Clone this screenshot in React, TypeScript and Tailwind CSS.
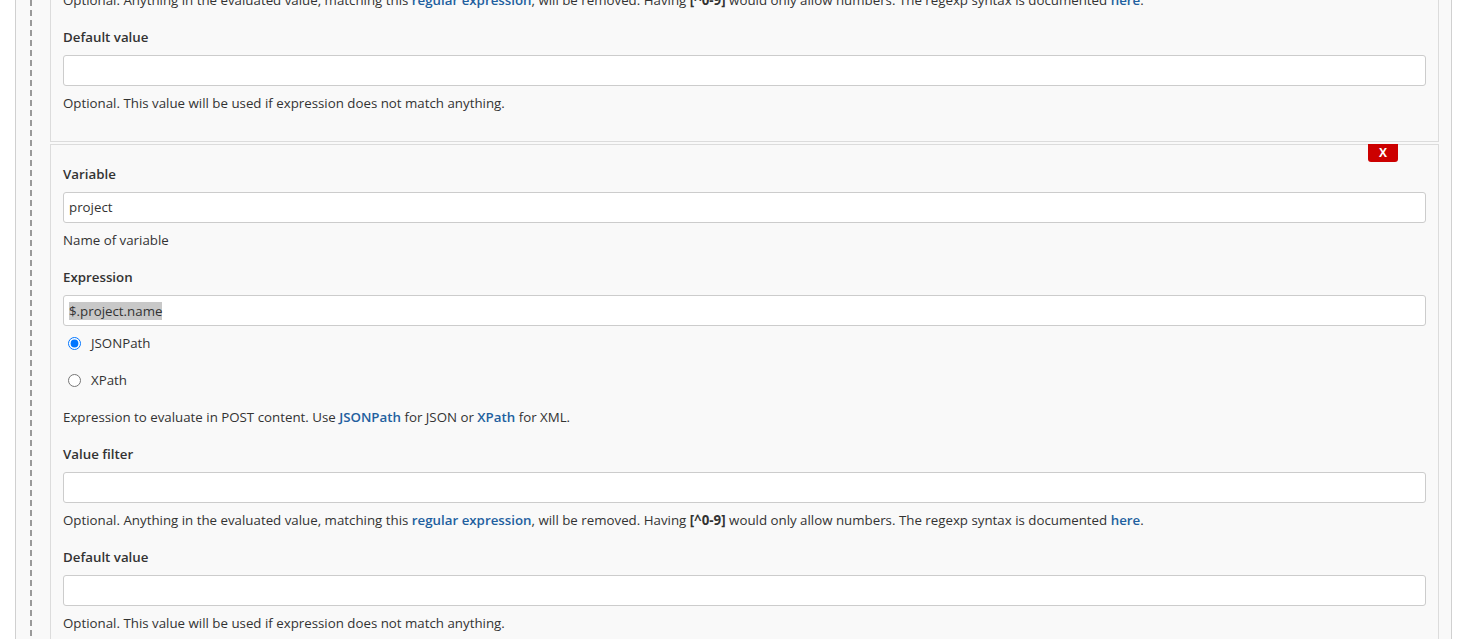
import type { ReactNode } from 'react'

const link = 'font-semibold text-[#22609f]'

function Label({ children }: { children: ReactNode }) {
  return <div className="h-5 leading-5 font-semibold">{children}</div>
}

function Help({ children, className = '' }: { children: ReactNode; className?: string }) {
  return <div className={`h-5 leading-5 whitespace-nowrap ${className}`}>{children}</div>
}

function TextBox({ value, selected }: { value?: string; selected?: boolean }) {
  return (
    <div className="mt-2 flex h-[31px] items-center rounded-[3px] border border-[#cccccc] bg-white px-[5px]">
      {value && (
        <span className={selected ? 'bg-[#c8c8c8] leading-[18px]' : ''}>{value}</span>
      )}
    </div>
  )
}

function Radio({ label, checked }: { label: string; checked?: boolean }) {
  return (
    <div className="flex h-5 items-center pt-px">
      <input
        type="radio"
        name="exprType"
        defaultChecked={checked}
        className="m-0 ml-[5px] h-[13px] w-[13px] accent-[#0075ff]"
      />
      <span className="ml-[10px]">{label}</span>
    </div>
  )
}

function RegexHelp({ className = '' }: { className?: string }) {
  return (
    <Help className={className}>
      Optional. Anything in the evaluated value, matching this <span className={link}>regular expression</span>, will be
      removed. Having <b>[^0-9]</b> would only allow numbers. The regexp syntax is documented{' '}
      <span className={link}>here</span>.
    </Help>
  )
}

function DefaultValue() {
  return (
    <div>
      <Label>Default value</Label>
      <TextBox />
      <Help className="mt-[7px]">Optional. This value will be used if expression does not match anything.</Help>
    </div>
  )
}

export default function App() {
  return (
    <div className="h-screen overflow-hidden bg-white font-['Open_Sans',sans-serif] text-[13.3px] text-[#333333]">
      <div className="-mt-[10px] ml-[15px] flex h-[calc(100vh+10px)] w-[1437px] border-x border-[#d0d0d0] bg-[#f9f9f9]">
        <div className="ml-[14px] w-[2px] bg-[repeating-linear-gradient(to_bottom,#9a9a9a_0_6px,transparent_6px_10px)]" />
        <div className="ml-[18px] w-[1389px]">
          {/* previous entry, cut off at the top */}
          <div className="border-x border-b border-[#dcdcdc] bg-[#f9f9f9] px-3 pb-[28px]">
            <RegexHelp className="mb-[17px]" />
            <DefaultValue />
          </div>

          {/* current entry */}
          <div className="relative mt-[2px] border border-[#dcdcdc] bg-[#f9f9f9] px-3 pt-[19px] pb-[28px]">
            <button className="absolute -top-px right-[40px] flex h-[18px] w-[30px] items-center justify-center rounded-b-[3px] bg-[#cc0000] text-[12px] font-bold leading-none text-white">
              X
            </button>

            <div className="mb-[17px]">
              <Label>Variable</Label>
              <TextBox value="project" />
              <Help className="mt-[7px]">Name of variable</Help>
            </div>

            <div className="mb-[17px]">
              <Label>Expression</Label>
              <TextBox value="$.project.name" selected />
              <div className="mt-[7px]">
                <Radio label="JSONPath" checked />
              </div>
              <div className="mt-[17px]">
                <Radio label="XPath" />
              </div>
              <Help className="mt-[17px]">
                Expression to evaluate in POST content. Use <span className={link}>JSONPath</span> for JSON or{' '}
                <span className={link}>XPath</span> for XML.
              </Help>
            </div>

            <div className="mb-[17px]">
              <Label>Value filter</Label>
              <TextBox />
              <RegexHelp className="mt-[7px]" />
            </div>

            <DefaultValue />
          </div>
        </div>
      </div>
    </div>
  )
}
